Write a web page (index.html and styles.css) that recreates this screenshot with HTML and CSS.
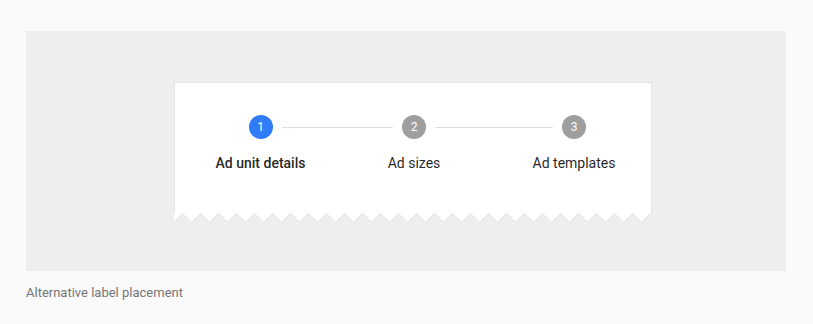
FILE: index.html
```html
<!DOCTYPE html>
<html>
<head>
<meta charset="utf-8">
<link rel="stylesheet" href="styles.css">
</head>
<body>
<div class="demo">
  <div class="stage">
    <div class="card">
      <div class="stepper">
        <div class="step step-1">
          <div class="icon active">1</div>
          <div class="label active-label">Ad unit details</div>
        </div>
        <div class="line line-1"></div>
        <div class="step step-2">
          <div class="icon">2</div>
          <div class="label">Ad sizes</div>
        </div>
        <div class="line line-2"></div>
        <div class="step step-3">
          <div class="icon">3</div>
          <div class="label">Ad templates</div>
        </div>
      </div>
      <svg class="tear" width="478" height="11" viewBox="0 0 478 11">
        <polygon fill="#ffffff" points="0,0 0,8.5 8.5,0 17.5,9 26.5,0 35.5,9 44.5,0 53.5,9 62.5,0 71.5,9 80.5,0 89.5,9 98.5,0 107.5,9 116.5,0 125.5,9 134.5,0 143.5,9 152.5,0 161.5,9 170.5,0 179.5,9 188.5,0 197.5,9 206.5,0 215.5,9 224.5,0 233.5,9 242.5,0 251.5,9 260.5,0 269.5,9 278.5,0 287.5,9 296.5,0 305.5,9 314.5,0 323.5,9 332.5,0 341.5,9 350.5,0 359.5,9 368.5,0 377.5,9 386.5,0 395.5,9 404.5,0 413.5,9 422.5,0 431.5,9 440.5,0 449.5,9 458.5,0 467.5,9 476.5,0 478,0"/>
        <polyline fill="none" stroke="#e0e0e0" stroke-width="1" points="0.5,8.5 8.5,0.5 17.5,9.5 26.5,0.5 35.5,9.5 44.5,0.5 53.5,9.5 62.5,0.5 71.5,9.5 80.5,0.5 89.5,9.5 98.5,0.5 107.5,9.5 116.5,0.5 125.5,9.5 134.5,0.5 143.5,9.5 152.5,0.5 161.5,9.5 170.5,0.5 179.5,9.5 188.5,0.5 197.5,9.5 206.5,0.5 215.5,9.5 224.5,0.5 233.5,9.5 242.5,0.5 251.5,9.5 260.5,0.5 269.5,9.5 278.5,0.5 287.5,9.5 296.5,0.5 305.5,9.5 314.5,0.5 323.5,9.5 332.5,0.5 341.5,9.5 350.5,0.5 359.5,9.5 368.5,0.5 377.5,9.5 386.5,0.5 395.5,9.5 404.5,0.5 413.5,9.5 422.5,0.5 431.5,9.5 440.5,0.5 449.5,9.5 458.5,0.5 467.5,9.5 476.5,0.5 477.5,0.5"/>
      </svg>
    </div>
  </div>
  <div class="caption">Alternative label placement</div>
</div>
</body>
</html>
```

FILE: styles.css
```css
html, body {
  margin: 0;
  padding: 0;
  background: #fafafa;
  font-family: Roboto, "Liberation Sans", Arial, sans-serif;
}

.demo {
  padding: 31px 27px 0 26px;
}

.stage {
  height: 240px;
  background: #eeeeee;
  display: flex;
  align-items: flex-start;
  padding-left: 148px;
  padding-top: 51px;
  box-sizing: border-box;
}

.card {
  width: 478px;
  display: flex;
  flex-direction: column;
}

.stepper {
  height: 132px;
  box-sizing: border-box;
  background: #ffffff;
  border: 1px solid #e4e4e4;
  border-bottom: none;
  padding: 32px 0 0 36px;
  display: flex;
  align-items: flex-start;
}

.tear {
  display: block;
  margin-top: -1px;
}

.step {
  display: flex;
  flex-direction: column;
  align-items: center;
  flex: none;
}

.step-1 { width: 99px; }
.step-2 { width: 52px; }
.step-3 { width: 84px; }

.icon {
  width: 24px;
  height: 24px;
  border-radius: 50%;
  background: #9e9e9e;
  color: #ffffff;
  font-size: 12px;
  line-height: 24px;
  text-align: center;
}

.icon.active {
  background: #2f7cf6;
}

.label {
  margin-top: 14px;
  font-size: 14px;
  line-height: 20px;
  color: rgba(0, 0, 0, 0.87);
  white-space: nowrap;
}

.active-label {
  font-weight: 500;
}

.line {
  flex: none;
  height: 1px;
  background: #e0e0e0;
  margin-top: 12px;
}

.line-1 {
  width: 111px;
  margin-left: -28px;
  margin-right: -5px;
}

.line-2 {
  width: 118px;
  margin-left: -5px;
  margin-right: -21px;
}

.caption {
  margin-top: 14px;
  font-size: 13px;
  line-height: 16px;
  color: #757575;
}
```
